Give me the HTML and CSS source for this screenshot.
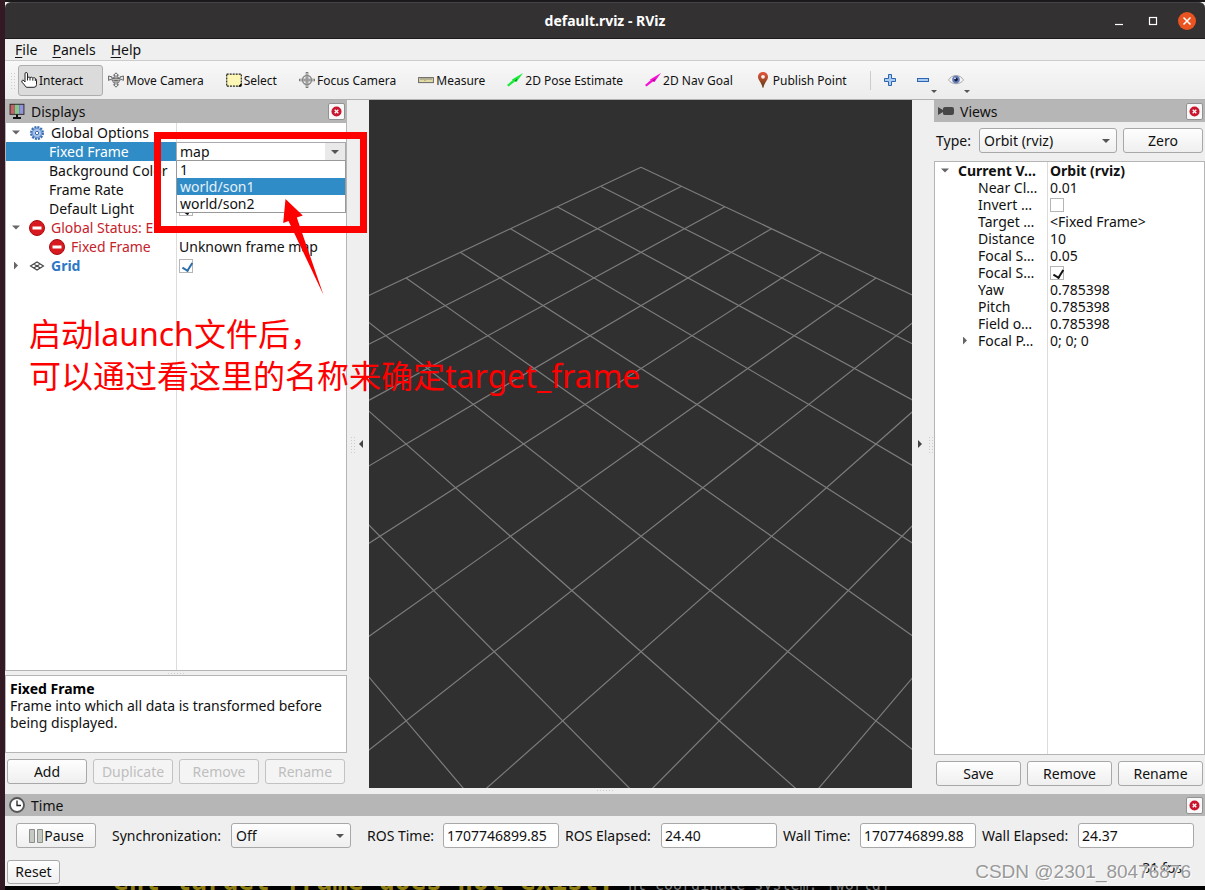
FILE: index.html
```html
<!DOCTYPE html>
<html lang="en">
<head>
<meta charset="utf-8">
<title>default.rviz - RViz</title>
<link rel="stylesheet" href="styles.css">
</head>
<body>
<div class="desktop">
  <div class="window">
    <header class="titlebar">
      <h1 class="title">default.rviz - RViz</h1>
      <div class="window-buttons">
        <button class="wbtn" aria-label="Minimize"><svg width="10" height="10"><path d="M1 8.5h8" stroke="#fff" stroke-width="1.2"/></svg></button>
        <button class="wbtn" aria-label="Maximize"><svg width="10" height="10"><rect x="1.5" y="1.5" width="7" height="7" fill="none" stroke="#fff" stroke-width="1.2"/></svg></button>
        <button class="wbtn wbtn-close" aria-label="Close"><svg width="10" height="10"><path d="M1.5 1.5l7 7M8.5 1.5l-7 7" stroke="#fff" stroke-width="1.5"/></svg></button>
      </div>
    </header>

    <nav class="menubar">
      <button class="menu"><u>F</u>ile</button>
      <button class="menu"><u>P</u>anels</button>
      <button class="menu"><u>H</u>elp</button>
    </nav>

    <div class="toolbar" role="toolbar" aria-label="Tools">
      <span class="grip grip-tall"></span>
      <button class="tool tool-active"><svg width="16" height="16" viewBox="0 0 16 16"><path d="M4 8.500V1.800Q4 .5 5.200 .5T6.500 1.800V6Q7 4.800 8 5T9 6Q9.800 4.800 10.800 5.200T11.800 6.300Q12.500 5.400 13.500 5.700T14.300 7Q15.500 6.800 15.500 8.200V12.500Q15.500 15.300 13 15.300H6Q4.500 15.300 3.500 13L1 10.200Q.2 8.500 1.700 8.200T4 10z" fill="#fff" stroke="#222"/><path d="M6.500 6v2.500M9 6v2.500M11.800 6.300v2.400M14.300 7v2" stroke="#222"/></svg>Interact</button>
      <button class="tool"><svg width="16" height="16" viewBox="0 0 16 16" fill="#eee" stroke="#666"><circle cx="8" cy="8" r="3.500"/><path d="M8 .8l2.500 2.500H9v9.400h1.500L8 15.200l-2.500-2.500H7V3.300H5.500z"/><path d="M.6 4l3.600 1L3.500 6.200q4.500 1.600 9 0L11.800 5l3.600-1v4.500l-1.400-1q-6 2.200-12 0l-1.400 1z"/></svg>Move Camera</button>
      <button class="tool"><svg width="16" height="16" viewBox="0 0 16 16"><rect x=".7" y="2.200" width="14.600" height="12" fill="#fdf7b5" stroke="#222" stroke-width="1.200" stroke-dasharray="2 1"/><path d="M12 14.500h3.500V11z"/></svg>Select</button>
      <button class="tool"><svg width="16" height="16" viewBox="0 0 16 16"><path d="M8 0v16M0 8h16" stroke="#777" stroke-width="2.600"/><path d="M8 1v14M1 8h14" stroke="#eee" stroke-width="1"/><circle cx="8" cy="8" r="4.500" fill="none" stroke="#888" stroke-width="1.400"/><path d="M8 5v6M5 8h6" stroke="#888"/></svg>Focus Camera</button>
      <button class="tool"><svg width="16" height="16" viewBox="0 0 16 16"><rect x=".6" y="5.600" width="14.800" height="5" fill="#e3dba4" stroke="#666"/><path d="M3 6v2M5 6v2M7 6v3M9 6v2M11 6v2M13 6v2" stroke="#777" stroke-width=".8"/></svg>Measure</button>
      <button class="tool"><svg width="16" height="16" viewBox="0 0 16 16"><path d="M0 13L5.500 8.300 5 7.500 16 1 9.500 10 8 9.400 1.500 14.500z" fill="#1bea3c"/><path d="M7.500 8.500l3-2-1.500 3z" fill="#087c1c"/></svg>2D Pose Estimate</button>
      <button class="tool"><svg width="16" height="16" viewBox="0 0 16 16"><path d="M0 13L5.500 8.300 5 7.500 16 1 9.500 10 8 9.400 1.500 14.500z" fill="#f413d4"/><path d="M7.500 8.500l3-2-1.500 3z" fill="#8c0879"/></svg>2D Nav Goal</button>
      <button class="tool"><svg width="16" height="16" viewBox="0 0 16 16"><defs><linearGradient id="pin" x2="0" y2="1"><stop stop-color="#e9573b"/><stop offset="1" stop-color="#5c3a16"/></linearGradient></defs><path d="M8 0C4.800 0 3 2.300 3 5c0 3 3.500 5.500 4.600 10.700h.8C9.500 10.500 13 8 13 5c0-2.700-1.800-5-5-5z" fill="url(#pin)"/><circle cx="8" cy="4.800" r="1.900" fill="#f7eeea"/></svg>Publish Point</button>
      <span class="separator"></span>
      <button class="mini" aria-label="Add tool"><svg width="14" height="14" viewBox="0 0 14 14"><path d="M5.500 1.500h3v4h4v3h-4v4h-3v-4h-4v-3h4z" fill="#a9cbef" stroke="#2c66ae"/></svg></button>
      <button class="mini mini-menu" aria-label="Remove tool"><svg width="14" height="14" viewBox="0 0 14 14"><rect x="1.500" y="5.500" width="11" height="3" fill="#a9cbef" stroke="#2c66ae"/></svg></button>
      <button class="mini mini-menu" aria-label="Visibility"><svg width="16" height="14" viewBox="0 0 16 14"><path d="M.5 7C4 1 12 1 15.500 7 12 12 4 12 .5 7z" fill="#f4f4f4" stroke="#aaa"/><circle cx="8" cy="6.600" r="3.800" fill="#647bb8"/><circle cx="8" cy="6.600" r="1.800" fill="#111a38"/><circle cx="7" cy="5.400" r=".8" fill="#fff"/></svg></button>
    </div>

    <main class="workspace">
      <section class="dock dock-left" aria-label="Displays">
        <div class="dock-head">
          <svg width="16" height="16" viewBox="0 0 16 16"><rect x=".6" y=".8" width="14.800" height="11" fill="#222"/><path d="M1.500 1.700h4.300v9.200H1.500z" fill="#c06468"/><path d="M5.800 1.700h4.400v9.200H5.800z" fill="#82c888"/><path d="M10.200 1.700h4.300v9.200h-4.300z" fill="#9492d8"/><path d="M8 11.500V15M4 15h8" stroke="#111" stroke-width="2"/></svg>
          <h2>Displays</h2>
          <button class="close" aria-label="Close Displays"><svg width="11" height="11" viewBox="0 0 11 11"><circle cx="5.500" cy="5.500" r="5" fill="#c9152e"/><path d="M3.700 3.700l3.600 3.600M7.300 3.700L3.700 7.300" stroke="#fff" stroke-width="1.300"/></svg></button>
        </div>
        <div class="tree tree-displays">
          <table>
            <colgroup><col class="name-col"><col></colgroup>
            <tr><td><div class="name"><span class="arrow open"></span><svg width="16" height="16" viewBox="0 0 16 16"><circle cx="8" cy="8" r="5.800" fill="#a9c5ea" stroke="#3c6eb4" stroke-width="2.400" stroke-dasharray="2 1"/><circle cx="8" cy="8" r="4.500" fill="#a9c5ea" stroke="#6d95cc"/><circle cx="8" cy="8" r="1.700" fill="#fff" stroke="#3c6eb4"/></svg>Global Options</div></td><td></td></tr>
            <tr class="selected"><td><div class="name child"><label for="frame">Fixed Frame</label></div></td><td><div class="frame-combo"><select id="frame"><option>map</option></select>
              <ul class="popup" role="listbox" aria-label="Frames"><li role="option">1</li><li role="option" aria-selected="true" class="hot">world/son1</li><li role="option">world/son2</li></ul></div></td></tr>
            <tr><td><div class="name child">Background Color</div></td><td></td></tr>
            <tr><td><div class="name child">Frame Rate</div></td><td></td></tr>
            <tr><td><div class="name child"><label for="light">Default Light</label></div></td><td><input type="checkbox" id="light" checked></td></tr>
            <tr class="error"><td><div class="name"><span class="arrow open"></span><svg width="16" height="16" viewBox="0 0 16 16"><circle cx="8" cy="8" r="7.500" fill="#d81a20" stroke="#a50d12"/><path d="M3.500 6.500h9v3h-9z" fill="#fff"/></svg>Global Status: E…</div></td><td></td></tr>
            <tr><td><div class="name child error"><svg width="16" height="16" viewBox="0 0 16 16"><circle cx="8" cy="8" r="7.500" fill="#d81a20" stroke="#a50d12"/><path d="M3.500 6.500h9v3h-9z" fill="#fff"/></svg>Fixed Frame</div></td><td>Unknown frame map</td></tr>
            <tr><td><div class="name grid-name"><span class="arrow"></span><svg width="16" height="16" viewBox="0 0 16 16" fill="none" stroke="#444" stroke-width="1.100"><path d="M1.500 8L8 4l6.500 4L8 12zM4.700 6l6.600 4M11.300 6l-6.600 4"/></svg><label for="grid">Grid</label></div></td><td><input type="checkbox" id="grid" class="blue" checked></td></tr>
          </table>
        </div>
        <div class="split"><span class="grip grip-wide"></span></div>
        <div class="help"><strong>Fixed Frame</strong><p>Frame into which all data is transformed before being displayed.</p></div>
        <div class="actions">
          <button class="btn">Add</button><button class="btn" disabled>Duplicate</button><button class="btn" disabled>Remove</button><button class="btn" disabled>Rename</button>
        </div>
      </section>

      <button class="collapse" aria-label="Hide left panel"><span class="grip"></span><svg width="4" height="8"><path d="M4 0v8L0 4z" fill="#444"/></svg></button>

      <svg class="viewport" viewBox="-272 -344 543 688" preserveAspectRatio="xMidYMid slice" role="img" aria-label="3D view">
        <g id="rays" fill="none" stroke="#7c7c7c" stroke-width="1.200">
          <path d="M0-276.800L-587.300 0M40.500-257.700L-556.300 43.700M83.900-237.300L-522 92.300M130.500-215.300L-483.600 146.600M180.700-191.700L-440.400 207.600M234.900-166.100L-391.500 276.800M293.600-138.400L-335.600 355.900M357.500-108.300L-271 447.200M427.100-75.500L-195.800 553.700M503.400-39.500L-106.800 679.500M587.300 0L0 830.500"/>
        </g>
        <use href="#rays" transform="scale(-1 1)"/>
      </svg>

      <button class="collapse" aria-label="Hide right panel"><svg width="4" height="8"><path d="M0 0v8l4-4z" fill="#444"/></svg><span class="grip"></span></button>

      <section class="dock dock-right" aria-label="Views">
        <div class="dock-head">
          <svg width="16" height="16" viewBox="0 0 16 16"><path d="M0 4l5 3V5.500Q5 4 7 4h7q2 0 2 2v4q0 2-2 2H7q-2 0-2-1.500V9l-5 3z" fill="#474747"/></svg>
          <h2>Views</h2>
          <button class="close" aria-label="Close Views"><svg width="11" height="11" viewBox="0 0 11 11"><circle cx="5.500" cy="5.500" r="5" fill="#c9152e"/><path d="M3.700 3.700l3.600 3.600M7.300 3.700L3.700 7.300" stroke="#fff" stroke-width="1.300"/></svg></button>
        </div>
        <div class="type-row">
          <label for="type">Type:</label>
          <div class="combo"><select id="type"><option>Orbit (rviz)</option></select></div>
          <button class="btn">Zero</button>
        </div>
        <div class="tree tree-views">
          <table>
            <colgroup><col class="name-col"><col></colgroup>
            <tr class="strong"><td><div class="name"><span class="arrow open"></span>Current V…</div></td><td>Orbit (rviz)</td></tr>
            <tr><td><div class="name child">Near Cl…</div></td><td>0.01</td></tr>
            <tr><td><div class="name child"><label for="invert">Invert …</label></div></td><td><input type="checkbox" id="invert"></td></tr>
            <tr><td><div class="name child">Target …</div></td><td>&lt;Fixed Frame&gt;</td></tr>
            <tr><td><div class="name child">Distance</div></td><td>10</td></tr>
            <tr><td><div class="name child">Focal S…</div></td><td>0.05</td></tr>
            <tr><td><div class="name child"><label for="fixed">Focal S…</label></div></td><td><input type="checkbox" id="fixed" checked></td></tr>
            <tr><td><div class="name child">Yaw</div></td><td>0.785398</td></tr>
            <tr><td><div class="name child">Pitch</div></td><td>0.785398</td></tr>
            <tr><td><div class="name child">Field o…</div></td><td>0.785398</td></tr>
            <tr><td><div class="name sub"><span class="arrow"></span>Focal P…</div></td><td>0; 0; 0</td></tr>
          </table>
        </div>
        <div class="actions">
          <button class="btn">Save</button><button class="btn">Remove</button><button class="btn">Rename</button>
        </div>
      </section>
    </main>
    <div class="split split-bottom"><span class="grip grip-wide"></span></div>

    <section class="time" aria-label="Time">
      <div class="dock-head">
        <svg width="16" height="16" viewBox="0 0 16 16"><circle cx="8" cy="8" r="7" fill="#fff" stroke="#555" stroke-width="1.800"/><path d="M8 3.500V8.500h4" fill="none" stroke="#222" stroke-width="1.300"/></svg>
        <h2>Time</h2>
        <button class="close" aria-label="Close Time"><svg width="11" height="11" viewBox="0 0 11 11"><circle cx="5.500" cy="5.500" r="5" fill="#c9152e"/><path d="M3.700 3.700l3.600 3.600M7.300 3.700L3.700 7.300" stroke="#fff" stroke-width="1.300"/></svg></button>
      </div>
      <div class="time-row">
        <button class="btn"><svg width="16" height="16" viewBox="0 0 16 16" fill="#c5c9c3" stroke="#8b8f89"><path d="M1.500 1.500h5v13h-5zM9.500 1.500h5v13h-5z"/></svg>Pause</button>
        <label class="far" for="sync">Synchronization:</label>
        <div class="combo"><select id="sync"><option>Off</option></select></div>
        <label class="far" for="rt">ROS Time:</label><input class="field" id="rt" value="1707746899.85">
        <label for="re">ROS Elapsed:</label><input class="field" id="re" value="24.40">
        <label for="wt">Wall Time:</label><input class="field" id="wt" value="1707746899.88">
        <label for="we">Wall Elapsed:</label><input class="field" id="we" value="24.37">
      </div>
    </section>
    <footer class="status">
      <button class="btn">Reset</button>
      <span class="fps">31 fps</span>
    </footer>
  </div>
  <div class="terminal"><span class="term-warn">ent target frame does not exist.</span><span class="term-info">nt coordinate system: [world]</span></div>

  <div class="red-box"></div>
  <svg class="red-arrow" width="42" height="98" viewBox="0 0 42 98"><path d="M3.500 1l17.300 16.500-6 2L41.500 97 6.500 23l-5.300 2z" fill="#fe0000"/></svg>
  <p class="note" lang="zh">启动launch文件后，<br>可以通过看这里的名称来确定target_frame</p>
  <span class="watermark">CSDN @2301_80476876</span>
</div>
</body>
</html>
```

FILE: styles.css
```css
* { box-sizing: border-box; }
body { margin: 0; background: #000; }
button, input, select { font: inherit; color: inherit; margin: 0; }
button { padding: 0; border: 0; background: none; }
h1, h2, p { margin: 0; font-size: inherit; }
svg { flex: none; }

.desktop {
  position: relative;
  display: flex;
  flex-direction: column;
  min-height: 100vh;
  overflow: hidden;
  padding: 2px 0 0 5px;
  background: linear-gradient(90deg, #331923 5px, #1b191b 5px);
  font: 14px/17px "Noto Sans", "Open Sans", sans-serif;
  color: #111;
}
.window { flex: 1; display: flex; flex-direction: column; background: #efefef; }

.titlebar {
  display: flex;
  align-items: center;
  height: 37px;
  padding: 0 9px;
  background: #333132;
  border-top: 1px solid #454344;
  border-bottom: 1px solid #1c1a1b;
  border-radius: 6px 6px 0 0;
  color: #fff;
}
.title { flex: 1; padding-left: 86px; text-align: center; font-size: 14px; font-weight: bold; }
.window-buttons { display: flex; gap: 16px; }
.wbtn { display: grid; place-items: center; width: 18px; height: 18px; border-radius: 50%; }
.wbtn-close { background: #e95420; }

.menubar { display: flex; gap: 15px; height: 22px; padding: 0 10px; border-bottom: 1px solid #ccc; }
.menu u { text-underline-offset: 2px; }

.toolbar {
  display: flex;
  align-items: center;
  gap: 2px;
  height: 39px;
  padding: 0 5px;
  background: linear-gradient(#f8f8f8, #ececec);
  border-bottom: 1px solid #b0b0b0;
  box-shadow: inset 0 -1px #eee;
  font-size: 12px;
}
.grip {
  width: 5px;
  height: 17px;
  background: radial-gradient(circle, #ccc 1px, transparent 1px) 0 0 / 3px 3px;
}
.grip-wide { width: 18px; height: 3px; }
.tool {
  display: flex;
  align-items: center;
  gap: 2px;
  height: 31px;
  padding: 0 16px 0 2px;
  border: 1px solid transparent;
  border-radius: 3px;
  white-space: nowrap;
}
.toolbar .grip { margin-right: 1px; }
.tool-active { min-width: 85px; background: #dbdbdb; border-color: #adadad; }
.separator { width: 1px; height: 19px; margin: 0 7px 0 4px; background: #ccc; }
.mini { position: relative; display: grid; place-items: center; width: 20px; height: 24px; margin-right: 11px; }
.mini-menu::after {
  content: "";
  position: absolute;
  right: -4px;
  bottom: -1px;
  border: 3px solid transparent;
  border-top-color: #555;
  border-bottom: 0;
}

.workspace { flex: 1; display: flex; min-height: 0; }
.dock { display: flex; flex-direction: column; min-height: 0; }
.dock-left { width: 342px; flex: none; }
.dock-right { width: 271px; flex: none; }
.dock-head {
  display: flex;
  align-items: center;
  gap: 6px;
  height: 22px;
  padding: 0 2px 0 4px;
  background: #b6b6b6;
}
.dock-head h2 { flex: 1; font-weight: normal; }
.close {
  display: grid;
  place-items: center;
  width: 17px;
  height: 17px;
  background: #f8f8f8;
  border: 1px solid #929292;
  border-radius: 2px;
}

.tree { flex: 1; border: 1px solid #b5b5b5; }
.tree-displays { background: linear-gradient(#dcdcdc, #dcdcdc) 170px 0 / 1px 100% no-repeat #fff; }
.tree-views { background: linear-gradient(#dcdcdc, #dcdcdc) 112px 0 / 1px 100% no-repeat #fff; }
.tree table { width: 100%; table-layout: fixed; border-collapse: collapse; }
.tree td { height: 17px; padding: 0 0 0 3px; white-space: nowrap; }
.tree td:first-child { padding: 0; }
.tree-displays td { height: 19px; }
.tree-displays .name-col { width: 170px; }
.tree-views .name-col { width: 112px; }
.name { display: flex; align-items: center; gap: 6px; padding-left: 6px; }
.name .arrow { margin-right: 3px; }
.name.child { padding-left: 43px; }
.tree-views .name { gap: 9px; }
.tree-views .name .arrow { margin-right: 0; }
.tree-views .sub { padding-left: 26px; }
.arrow { flex: none; width: 8px; height: 8px; background: #666; clip-path: polygon(25% 0, 75% 50%, 25% 100%); }
.arrow.open { clip-path: polygon(0 25%, 100% 25%, 50% 75%); }
.strong { font-weight: bold; }
.error { color: #c5232b; }
.grid-name { color: #2d78c4; font-weight: bold; }
.selected td { background: #308cc6; color: #fff; }

.frame-combo {
  position: relative;
  height: 19px;
  margin-left: -3px;
  background: linear-gradient(90deg, #fff, #fff) 0 0 / calc(100% - 20px) 100% no-repeat #e9e9e9;
  border: 1px solid #aaa;
  border-bottom-color: #777;
  color: #111;
}
.frame-combo select, .combo select {
  appearance: none;
  width: 100%;
  height: 100%;
  border: 0;
  padding: 0 4px;
  background: none;
}
.frame-combo select { padding: 0 3px; display: block; line-height: 16px; }
.frame-combo::after, .combo::after {
  content: "";
  position: absolute;
  right: 6px;
  top: 7px;
  border: 4px solid transparent;
  border-top-color: #555;
  border-bottom: 0;
  pointer-events: none;
}
.popup {
  position: absolute;
  top: 17px;
  left: -1px;
  right: -1px;
  z-index: 1;
  margin: 0;
  padding: 0;
  list-style: none;
  background: #fff;
  border: 1px solid #999;
}
.popup li { padding-left: 3px; }
.popup .hot { background: #308cc6; color: #e6f1f9; }

input[type="checkbox"] {
  appearance: none;
  display: block;
  width: 14px;
  height: 14px;
  background: #fff;
  border: 1px solid #b5b5b5;
  color: #111;
}
input[type="checkbox"]:checked::after {
  content: "";
  display: block;
  width: 5px;
  height: 8px;
  margin: 1px 0 0 4px;
  border: solid currentColor;
  border-width: 0 2px 2px 0;
  transform: rotate(32deg);
}
input.blue { color: #2b6cab; }

.split { display: flex; justify-content: center; height: 4px; padding-top: 1px; }
.split-bottom { height: 6px; }
.help { height: 78px; padding: 4px; background: #fff; border: 1px solid #b5b5b5; }
.help strong { display: block; color: #000; }
.actions { display: flex; gap: 6px; padding: 6px 2px 4px; }
.dock-right .actions { padding-bottom: 2px; }
.actions .btn { flex: 1; }
.btn {
  display: flex;
  align-items: center;
  justify-content: center;
  height: 25px;
  background: linear-gradient(#fefefe, #efefef);
  border: 1px solid #a8a8a8;
  border-radius: 3px;
  white-space: nowrap;
}
.btn:disabled { color: #bebebe; border-color: #c2c2c2; background: #f4f4f4; }

.collapse { display: flex; flex: none; align-items: center; justify-content: space-between; width: 22px; padding: 0 6px 0 3px; }
.viewport + .collapse { padding: 0 1px 0 6px; }
.viewport { flex: 1; min-width: 0; height: auto; background: #303030; }

.type-row { display: flex; align-items: center; gap: 6px; padding: 6px 2px 8px; }
.type-row label { width: 37px; }
.type-row .combo { flex: 1; }
.type-row .btn { width: 80px; }
.combo {
  position: relative;
  height: 25px;
  background: linear-gradient(#fefefe, #efefef);
  border: 1px solid #a8a8a8;
  border-radius: 3px;
}
.combo::after { top: 10px; }

.time { padding-bottom: 11px; }
.time-row {
  display: grid;
  grid-template-columns: 80px 123px 120px 80px 1fr 90px 1fr 71px 1fr 90px 1fr;
  align-items: center;
  gap: 6px;
  padding: 7px 11px 0;
}
.time-row label { white-space: nowrap; }
.far { padding-left: 10px; }
.field { width: 100%; height: 25px; padding: 0 3px; background: #fff; border: 1px solid #a8a8a8; border-radius: 3px; }
.status { display: flex; align-items: center; justify-content: space-between; padding: 0 23px 2px 2px; }
.status .btn { width: 53px; height: 24px; }
.fps { padding-bottom: 8px; }

.terminal {
  display: flex;
  flex: none;
  align-items: flex-end;
  gap: 14px;
  height: 5px;
  padding-left: 108px;
  overflow: hidden;
  background: #020202;
  white-space: pre;
}
.term-warn { font: bold 26px/20px "DejaVu Sans Mono", monospace; color: #8d7c10; }
.term-info { font: 15px/12px "DejaVu Sans Mono", monospace; color: #777; }

/* Annotations drawn over the window */
.red-box { position: absolute; left: 154px; top: 132px; width: 213px; height: 101px; border: 7px solid #fe0000; z-index: 2; pointer-events: none; }
.red-arrow { position: absolute; left: 282px; top: 198px; z-index: 2; pointer-events: none; }
.note {
  position: absolute;
  left: 29px;
  top: 313px;
  z-index: 2;
  color: #fe0000;
  font: 32px/42px "Noto Sans", "Noto Sans CJK SC", sans-serif;
  white-space: nowrap;
  pointer-events: none;
}
.watermark {
  position: absolute;
  right: 14px;
  bottom: 8px;
  z-index: 2;
  color: #999;
  font: 19px/22px "Liberation Sans", Arial, sans-serif;
  text-shadow: 1px 1px #fff;
  pointer-events: none;
}
```
